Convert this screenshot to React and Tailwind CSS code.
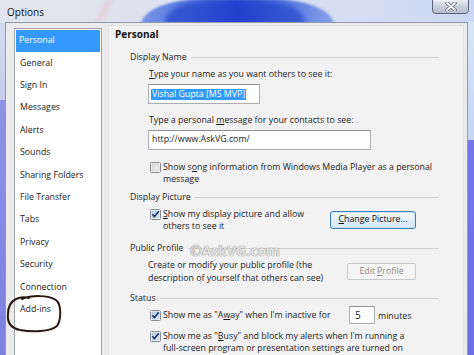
import React from "react";

function Check({ checked }) {
  return (
    <svg width="11" height="11" viewBox="0 0 11 11" className="shrink-0">
      <defs>
        <linearGradient id={checked ? "cbg1" : "cbg0"} x1="0" y1="0" x2="1" y2="1">
          <stop offset="0" stopColor={checked ? "#b9cde6" : "#d6d6d6"} />
          <stop offset="1" stopColor={checked ? "#e8f0fa" : "#f6f6f6"} />
        </linearGradient>
      </defs>
      <rect x="0.5" y="0.5" width="10" height="10" rx="1" fill="#fafafa" stroke="#8b8d90" />
      <rect x="2" y="2" width="7" height="7" fill={`url(#${checked ? "cbg1" : "cbg0"})`} stroke={checked ? "#9fb5d2" : "#c4c4c4"} strokeWidth="0.6" />
      {checked && (
        <path d="M2.3 5.3 L4.4 7.6 L8.8 2.2" stroke="#1f3f6e" strokeWidth="1.7" fill="none" strokeLinejoin="round" />
      )}
    </svg>
  );
}

function Heading({ children }) {
  return (
    <div className="ml-[15px] flex items-center gap-[4px] leading-[13px]">
      <span className="text-[#1a1a1a]">{children}</span>
      <div className="flex-1 h-[2px] border-t border-[#d0d0d0] border-b-white mt-[1px]" />
    </div>
  );
}

const items = [
  "General",
  "Sign In",
  "Messages",
  "Alerts",
  "Sounds",
  "Sharing Folders",
  "File Transfer",
  "Tabs",
  "Privacy",
  "Security",
  "Connection",
  "Add-ins",
];

export default function App() {
  return (
    <div
      className="relative w-[474px] h-[355px] overflow-hidden bg-[#c9d3ea] text-[8.8px] text-[#1b1b1b]"
      style={{ fontFamily: '"Open Sans", "Noto Sans", sans-serif' }}
    >
      {/* title bar */}
      <div className="relative h-[22px] bg-linear-to-r from-[#e2e5ee] via-[#dbe0f0] to-[#ccd8f4] overflow-hidden">
        <div className="absolute left-[100px] top-[0px] w-[8px] h-[22px] skew-x-[-25deg] bg-[#e4c3cb] opacity-50 blur-[2px]" />
        <div className="absolute left-[141px] top-[-1px] w-[193px] h-[26px] rounded-tl-[62px_26px] rounded-tr-[62px_26px] bg-linear-to-r from-[#7d97e8] via-[#2244cd] to-[#8aa2ea] blur-[1px]" />
        <div className="absolute left-[165px] top-[2px] w-[140px] h-[22px] rounded-tl-[40px_20px] rounded-tr-[40px_20px] bg-[#1f3fcb] opacity-60 blur-[2px]" />
        <div className="relative h-[22px] flex items-center pl-[7px]">
          <span className="text-[10px] text-[#111] mt-[2px]">Options</span>
        </div>
      </div>

      {/* close button */}
      <div className="absolute left-[432px] top-[-1px] w-[37px] h-[15px] rounded-b-[4px] border border-[#5d6679] bg-linear-to-b from-[#eef0f6] via-[#c8cedc] to-[#b7bfd1] flex items-center justify-center">
        <svg width="12" height="9" viewBox="0 0 12 9">
          <path d="M2 1 L10 8 M10 1 L2 8" stroke="#5a6274" strokeWidth="3.4" strokeLinecap="round" />
          <path d="M2 1 L10 8 M10 1 L2 8" stroke="#ffffff" strokeWidth="1.8" strokeLinecap="round" />
        </svg>
      </div>

      <div className="flex h-[333px]">
        {/* left frame */}
        <div className="w-[5px] flex flex-col">
          <div className="h-[78px] bg-linear-to-b from-[#d5dcee] to-[#c6cdee]" />
          <div className="flex-1 bg-linear-to-b from-[#8f93e6] to-[#7c80e0]" />
        </div>

        {/* content */}
        <div className="w-[463px] border-t border-l border-r border-[#8f9ab0] bg-[#ebebeb] flex pt-[5px] pl-[8px]">
          {/* list */}
          <div className="w-[88px] h-[340px] border border-[#9ea3ab] bg-white pt-[1px] px-[1px] shrink-0">
            <div className="h-[22px] bg-[#3399ff] text-white flex items-center pl-[3px]">Personal</div>
            {items.map((t) => (
              <div key={t} className="h-[22.4px] flex items-center pl-[4px] text-[#1b1b1b]">
                {t}
              </div>
            ))}
          </div>

          {/* right panel */}
          <div className="ml-[6px] w-[356px] h-[340px] mt-[-3px] bg-[#f2f2f2] border border-[#e2e2e2] pl-[6px] pr-[24px] pt-[2px] flex flex-col">
            <div className="font-bold text-[10px] leading-[13px] text-[#111]">Personal</div>

            <div className="mt-[10px]">
              <Heading>Display Name</Heading>
            </div>
            <div className="ml-[34px] mt-[4px] leading-[13px]">
              <span className="underline">T</span>ype your name as you want others to see it:
            </div>
            <div className="ml-[33px] mt-[3px] w-[112px] h-[20px] border border-[#abadb3] border-t-[#8e9096] bg-white flex items-center pl-[2px]">
              <span className="bg-[#3399ff] text-white leading-[11px] px-[1px]">Vishal Gupta [MS MVP]</span>
            </div>
            <div className="ml-[34px] mt-[10px] leading-[13px]">
              Type a personal <span className="underline">m</span>essage for your contacts to see:
            </div>
            <div className="ml-[33px] mt-[3px] w-[223px] h-[20px] border border-[#abadb3] border-t-[#8e9096] bg-white flex items-center pl-[3px]">
              http://www.AskVG.com/
            </div>

            <div className="ml-[35px] mt-[11px] flex items-start gap-[2px]">
              <div className="mt-[1px]">
                <Check checked={false} />
              </div>
              <div className="leading-[12px]">
                Show s<span className="underline">o</span>ng information from Windows Media Player as a personal
                <br />
                message
              </div>
            </div>

            <div className="mt-[6px]">
              <Heading>Display Picture</Heading>
            </div>
            <div className="ml-[35px] mt-[4px] flex items-start">
              <div className="mt-[1px]">
                <Check checked={true} />
              </div>
              <div className="ml-[2px] leading-[12px] w-[167px]">
                <span className="underline">S</span>how my display picture and allow
                <br />
                others to see it
              </div>
              <div className="mt-[3px] w-[86px] h-[18px] rounded-[3px] border border-[#3c7fb1] bg-linear-to-b from-[#f3f8fc] via-[#e3eef8] to-[#d4e6f5] flex items-center justify-center text-[#111] shadow-[inset_0_0_0_1px_#cfe6f7]">
                <span className="underline">C</span>hange Picture...
              </div>
            </div>

            <div className="mt-[10px]">
              <Heading>Public Profile</Heading>
            </div>
            <div className="ml-[33px] mt-[4px] flex items-start">
              <div className="leading-[13px] w-[199px]">
                Create or modify your public profile (the
                <br />
                description of yourself that others can see)
              </div>
              <div className="mt-[4px] w-[69px] h-[17px] rounded-[2px] border border-[#c6c9cd] bg-[#f5f5f5] flex items-center justify-center text-[#8a8a8a]">
                Edit <span className="underline ml-[2px]">P</span>rofile
              </div>
            </div>

            <div className="mt-[7px]">
              <Heading>Status</Heading>
            </div>
            <div className="ml-[35px] mt-[1px] h-[18px] flex items-center">
              <Check checked={true} />
              <div className="ml-[2px] w-[186px] leading-[13px]">
                Show me as "A<span className="underline">w</span>ay" when I'm inactive for
              </div>
              <div className="w-[26px] h-[18px] border border-[#abadb3] border-t-[#8e9096] bg-white flex items-center pl-[5px] text-[10px]">
                5
              </div>
              <div className="ml-[3px] mt-[3px] leading-[13px]">minutes</div>
            </div>
            <div className="ml-[35px] mt-[6px] flex items-start">
              <div className="mt-[1px]">
                <Check checked={true} />
              </div>
              <div className="ml-[2px] leading-[12px]">
                Show me as "<span className="underline">B</span>usy" and block my alerts when I'm running a
                <br />
                full-screen program or presentation settings are turned on
              </div>
            </div>
          </div>
        </div>

        {/* right frame */}
        <div className="w-[6px] flex flex-col">
          <div className="h-[118px] bg-linear-to-b from-[#d8e5f7] to-[#c3d7f4]" />
          <div className="flex-1 bg-linear-to-b from-[#7377e8] to-[#6a6fe6]" />
        </div>
      </div>

      {/* watermark */}
      <div className="absolute left-[190px] top-[242px] text-[14px] font-bold leading-[17px] text-[rgba(255,255,255,0.75)] [text-shadow:0_0_1px_#8a8a8a,0_0_1px_#8a8a8a]">
        ©AskVG.com
      </div>

      {/* hand-drawn circle around Add-ins */}
      <svg className="absolute left-0 top-[290px]" width="70" height="48" viewBox="0 0 70 48">
        <path
          d="M22 9 C32 5 48 5 56 10 C62 15 61 30 57 36 C50 42 32 42 20 40 C11 38 7 32 8 24 C8 17 10 12 16 9 C20 7 25 7 29 8"
          stroke="#2a1812"
          strokeWidth="2"
          fill="none"
          strokeLinecap="round"
        />
      </svg>
    </div>
  );
}
